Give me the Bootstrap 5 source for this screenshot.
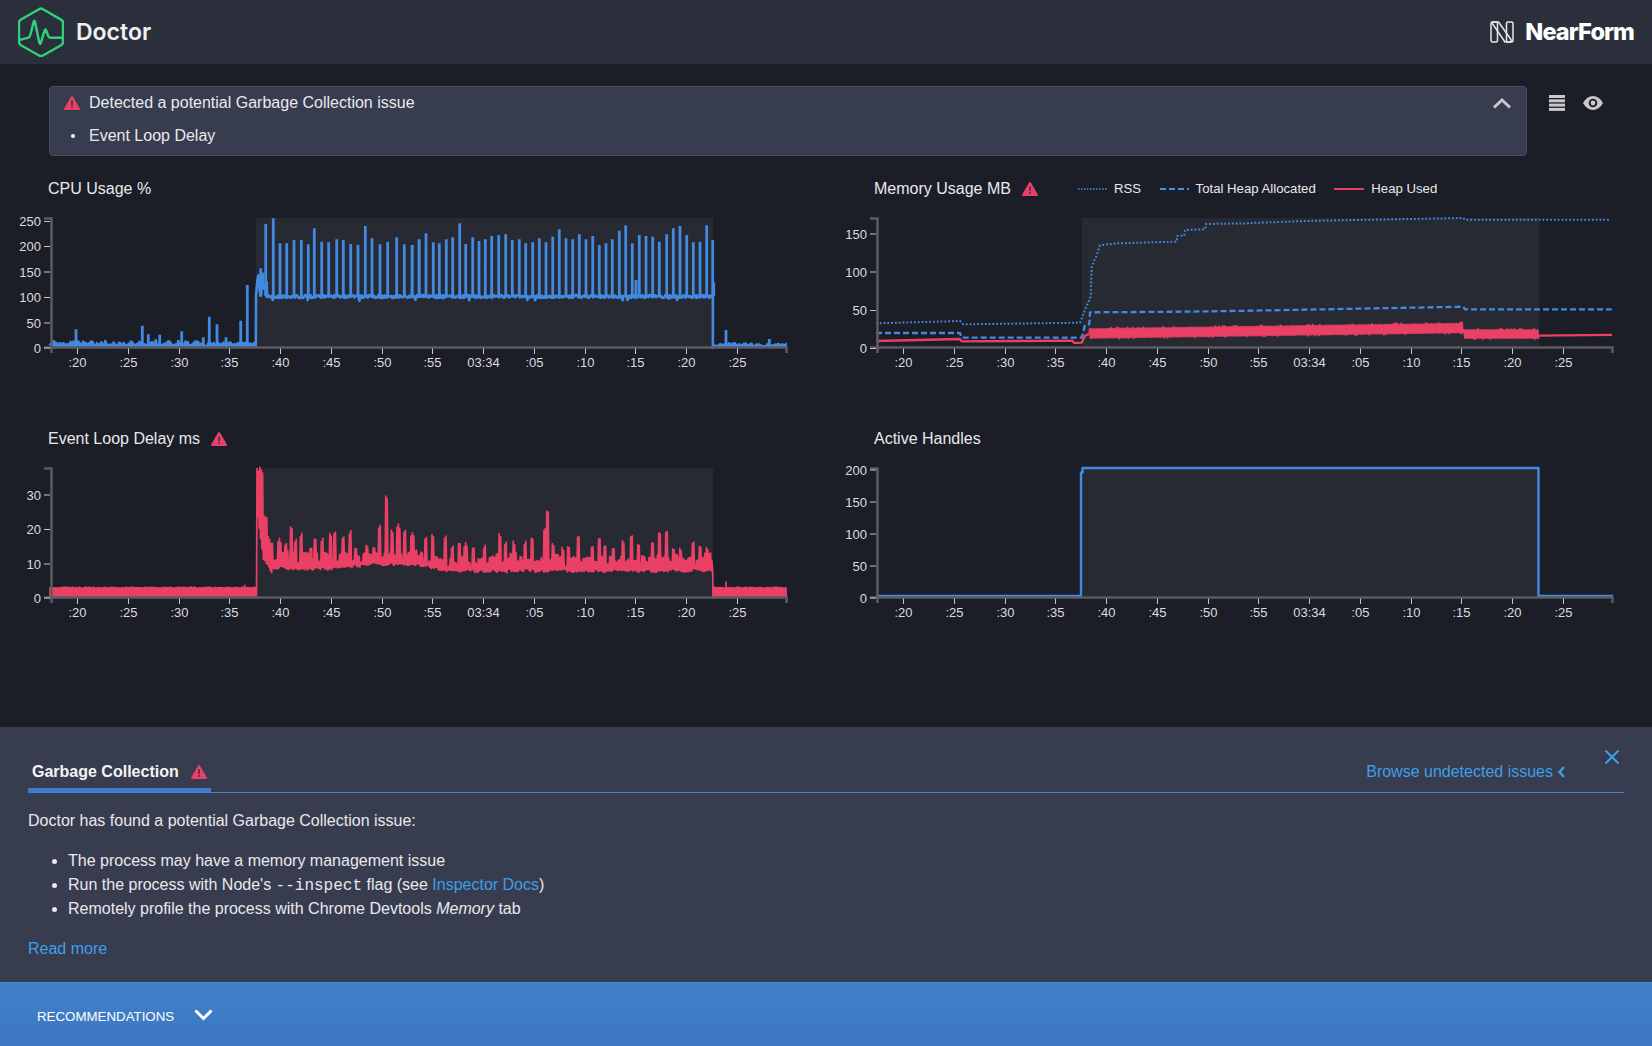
<!DOCTYPE html>
<html lang="en">
<head>
<meta charset="utf-8">
<title>Doctor</title>
<link href="https://cdn.jsdelivr.net/npm/bootstrap@5.3.0/dist/css/bootstrap.min.css" rel="stylesheet">
<style>
html,body{height:100%;}
body{background:#1b1e27;color:#e9e9ec;font-family:"Liberation Sans",Arial,sans-serif;font-size:16px;line-height:24px;overflow:hidden;}
.app-head{height:64px;flex:none;background:#2b2f3b;padding:0 18px 0 18px;}
.brand-name{font-family:Inter,sans-serif;font-weight:600;font-size:23px;color:#f0f0f2;margin-left:12px;line-height:64px;}
.nf-name{font-family:Inter,sans-serif;font-weight:800;font-size:23.5px;letter-spacing:-.9px;color:#fff;margin-left:11px;}
.top-row{padding:22px 0 0 49px;height:112px;}
.issue-box{width:1478px;height:70px;background:#383c4f;border:1px solid #484d62;border-radius:4px;padding:0 14px 0 14px;}
.issue-text{margin-top:-.5px;}
.issue-line{height:33px;line-height:24px;}
.issue-ico{width:25px;flex:none;}
.dot-mark{width:3.5px;height:3.5px;border-radius:50%;background:#e9e9ec;margin:0 14.500px 0 7px;flex:none;}
.chev-up{margin-top:10px;}
.tool-group{margin-left:22px;padding-top:9px;gap:18px;}
.chart-grid{display:grid;grid-template-columns:826px 826px;grid-auto-rows:250px;}
.chart-head{height:24px;padding:2px 0 0 48px;}
.warn-gap{margin-left:11px;}
.legend-list{margin-left:40px;font-size:13.2px;gap:18.5px;}
.legend-list>span{gap:7px;}
.chart-svg{display:block;width:826px;height:190px;}
.chart-svg text{font-family:"Liberation Sans",Arial,sans-serif;font-size:13px;fill:#dcdcdf;}
.detail-panel{height:255px;background:#383c4f;padding:0 28px;flex:none;}
.tab-row{height:66px;border-bottom:1.5px solid #3f7fd0;}
.tab-one{width:183px;height:100%;border-bottom:4px solid #3f7bc9;margin-bottom:-1.5px;padding:28px 0 0 4px;font-weight:700;color:#f4f4f6;gap:12px;white-space:nowrap;}
.side-link{color:#3f9fe8;text-decoration:none;}
.tab-right{height:100%;padding-top:24px;}
.close-x{margin-left:38px;margin-top:-29px;}
.detail-panel p{margin:0;}
.lead-line{margin-top:16px !important;}
.detail-panel ul{margin:16px 0 16px;padding-left:40px;}
.detail-panel code{font-family:"Liberation Mono",monospace;font-size:16px;line-height:1;color:#e9e9ec;}
.rec-bar{height:64px;flex:none;background:linear-gradient(#4080c9,#3d78c2);border-top:1px solid #4a86cf;padding-left:37px;color:#fff;font-size:13.3px;gap:20px;}
</style>
</head>
<body class="d-flex flex-column">
<header class="app-head d-flex align-items-center justify-content-between">
  <div class="d-flex align-items-center">
    <svg width="46" height="50" viewBox="17 6 47 51" fill="none" stroke="#2fd07c" stroke-width="2.500" stroke-linejoin="round" stroke-linecap="round">
      <path d="M38.500 8.200Q40.500 7 42.500 8.200L61 18.800Q63 20 63 22.300V41.500Q63 43.800 61 45L42.500 55.500Q40.500 56.600 38.500 55.500L20 45Q18 43.800 18 41.500V22.300Q18 20 20 18.800Z"/>
      <path d="M18.500 39.500L27 37.500Q29 37 30 33L33 21Q33.700 19 34.400 21L38.800 42.500Q39.500 45 40.300 42.500L44 30.500Q45 27.500 46 30.500L48 36Q48.500 37.300 50 37.300H63"/>
    </svg>
    <span class="brand-name">Doctor</span>
  </div>
  <div class="d-flex align-items-center">
    <svg width="24" height="22" viewBox="0 0 24 22" fill="none" stroke="#e6e6e8" stroke-width="1.500" stroke-linejoin="round">
      <rect x="1" y="1" width="6.500" height="20" rx="1.500"/>
      <rect x="16.500" y="1" width="6.500" height="20" rx="1.500"/>
      <path d="M3 1H8.500L21 18.500Q22 21 19.500 21H15L3 3.500Q2 1 3 1Z"/>
    </svg>
    <span class="nf-name">NearForm</span>
  </div>
</header>

<main class="flex-grow-1 overflow-hidden">
  <div class="top-row d-flex align-items-start">
    <div class="issue-box d-flex justify-content-between">
      <div class="issue-text">
        <div class="issue-line d-flex align-items-center">
          <span class="issue-ico d-flex"><svg width="16" height="14" viewBox="0 0 16 14"><use href="#warn"/></svg></span>
          <span>Detected a potential Garbage Collection issue</span>
        </div>
        <div class="issue-line d-flex align-items-center">
          <span class="dot-mark"></span>
          <span>Event Loop Delay</span>
        </div>
      </div>
      <svg class="chev-up" width="20" height="12" viewBox="0 0 20 12" fill="none" stroke="#c8c8cb" stroke-width="3"><path d="M2 10.500L10 3L18 10.500"/></svg>
    </div>
    <div class="tool-group d-flex align-items-center">
      <svg width="16" height="16" viewBox="0 0 16 16" fill="#c8c8cb"><rect y="0" width="16" height="3"/><rect y="4.300" width="16" height="3"/><rect y="8.600" width="16" height="3"/><rect y="12.900" width="16" height="3"/></svg>
      <svg width="20" height="14" viewBox="0 0 20 14"><path d="M0 7Q4 0 10 0T20 7Q16 14 10 14T0 7Z" fill="#c8c8cb"/><circle cx="10" cy="7" r="4.300" fill="#1b1e27"/><circle cx="10" cy="7" r="2.400" fill="#c8c8cb"/></svg>
    </div>
  </div>

  <section class="chart-grid">
    <div>
      <div class="chart-head d-flex align-items-center"><span>CPU Usage %</span></div>
      <svg class="chart-svg" id="c1" viewBox="0 200 826 190"></svg>
    </div>
    <div>
      <div class="chart-head d-flex align-items-center">
        <span>Memory Usage MB</span>
        <svg class="warn-gap" width="16" height="14" viewBox="0 0 16 14"><use href="#warn"/></svg>
        <div class="legend-list d-flex align-items-center">
          <span class="d-flex align-items-center"><svg width="29" height="4"><line x1="0" x2="29" y1="2" y2="2" stroke="#4a90e2" stroke-width="1.500" stroke-dasharray="1.500 1.500"/></svg>RSS</span>
          <span class="d-flex align-items-center"><svg width="29" height="4"><line x1="0" x2="29" y1="2" y2="2" stroke="#4a90e2" stroke-width="2" stroke-dasharray="6 3"/></svg>Total Heap Allocated</span>
          <span class="d-flex align-items-center"><svg width="30" height="4"><line x1="0" x2="30" y1="2" y2="2" stroke="#ea4065" stroke-width="2"/></svg>Heap Used</span>
        </div>
      </div>
      <svg class="chart-svg" id="c2" viewBox="826 200 826 190"></svg>
    </div>
    <div>
      <div class="chart-head d-flex align-items-center"><span>Event Loop Delay ms</span><svg class="warn-gap" width="16" height="14" viewBox="0 0 16 14"><use href="#warn"/></svg></div>
      <svg class="chart-svg" id="c3" viewBox="0 450 826 190"></svg>
    </div>
    <div>
      <div class="chart-head d-flex align-items-center"><span>Active Handles</span></div>
      <svg class="chart-svg" id="c4" viewBox="826 450 826 190"></svg>
    </div>
  </section>
</main>

<section class="detail-panel">
  <div class="tab-row d-flex justify-content-between">
    <div class="tab-one d-flex align-items-center">
      <span>Garbage Collection</span>
      <svg width="16" height="14" viewBox="0 0 16 14"><use href="#warn"/></svg>
    </div>
    <div class="tab-right d-flex align-items-center">
      <a class="side-link d-flex align-items-center" href="#">Browse undetected issues
        <svg class="ms-1" width="9" height="12" viewBox="0 0 9 12" fill="none" stroke="#3f9fe8" stroke-width="2.400"><path d="M7 1L2.500 6L7 11"/></svg>
      </a>
      <svg class="close-x me-1" width="16" height="16" viewBox="0 0 16 16" stroke="#3f9fe8" stroke-width="2" fill="none"><path d="M1.500 1.500L14.500 14.500M14.500 1.500L1.500 14.500"/></svg>
    </div>
  </div>
  <p class="lead-line">Doctor has found a potential Garbage Collection issue:</p>
  <ul>
    <li>The process may have a memory management issue</li>
    <li>Run the process with Node's <code>--inspect</code> flag (see <a class="side-link" href="#">Inspector Docs</a>)</li>
    <li>Remotely profile the process with Chrome Devtools <em>Memory</em> tab</li>
  </ul>
  <p><a class="side-link" href="#">Read more</a></p>
</section>

<footer class="rec-bar d-flex align-items-center">
  <span class="pt-1">RECOMMENDATIONS</span>
  <svg width="19" height="12" viewBox="0 0 19 12" fill="none" stroke="#fff" stroke-width="3"><path d="M1.500 1.500L9.500 9.500L17.500 1.500"/></svg>
</footer>

<svg width="0" height="0" class="position-absolute">
  <defs>
    <g id="warn">
      <path d="M8 1L15 13H1Z" fill="#ea4065" stroke="#ea4065" stroke-width="2" stroke-linejoin="round"/>
      <rect x="7.100" y="4.500" width="1.800" height="4.500" fill="#383c4f"/>
      <rect x="7.100" y="10" width="1.800" height="1.800" fill="#383c4f"/>
    </g>
  </defs>
</svg>

<script>
var seed=12345;
function R(){seed|=0;seed=seed+0x6D2B79F5|0;var t=Math.imul(seed^seed>>>15,1|seed);t=t+Math.imul(t^t>>>7,61|t)^t;return((t^t>>>14)>>>0)/4294967296;}
var BLUE='#4289e0',PINK='#ea4065';
var XL=[':20',':25',':30',':35',':40',':45',':50',':55','03:34',':05',':10',':15',':20',':25'];
function xt(i){return 77+i*50.75;}
function base(ox,y0,ticks){
  var s='';
  var top=y0-130, axis=y0-.5;
  s+='<rect x="'+(ox+256)+'" y="'+top+'" width="457" height="128" fill="#282a33"/>';
  return {bg:s,fg:function(){
    var f='';
    f+='<path d="M'+(ox+44)+' '+(top+.5)+'H'+(ox+51.5)+'V'+(y0+5)+'" fill="none" stroke="#5b5b61" stroke-width="2.500"/>';
    f+='<path d="M'+(ox+44)+' '+axis+'H'+(ox+786.5)+'V'+(y0+5)+'" fill="none" stroke="#5b5b61" stroke-width="2.500"/>';
    ticks.forEach(function(t){
      f+='<line x1="'+(ox+44)+'" x2="'+(ox+50)+'" y1="'+t[1]+'" y2="'+t[1]+'" stroke="#c8c8cc" stroke-width="1"/>';
      f+='<text x="'+(ox+41)+'" y="'+(t[1]+4.500)+'" text-anchor="end">'+t[0]+'</text>';
    });
    XL.forEach(function(l,i){
      var x=Math.round(ox+xt(i))+.5;
      f+='<line x1="'+x+'" x2="'+x+'" y1="'+(y0+.5)+'" y2="'+(y0+6)+'" stroke="#c8c8cc" stroke-width="1"/>';
      f+='<text x="'+x+'" y="'+(y0+19)+'" text-anchor="middle">'+l+'</text>';
    });
    return f;
  }};
}
function line(d,col,w,extra){return '<path d="'+d+'" fill="none" stroke="'+col+'" stroke-width="'+w+'" stroke-linejoin="round" '+(extra||'')+'/>';}

/* CPU */
(function(){
  var b=base(0,348,[[250,221.5],[200,246.5],[150,272],[100,297.5],[50,323],[0,348]]);
  var d='M50 345',x;
  for(x=50;x<256;x+=.6){d+='L'+x.toFixed(1)+' '+(346.5-R()*R()*6).toFixed(1);}
  d+='L256 296';
  for(x=257;x<267;x+=.7){d+='L'+x.toFixed(1)+' '+(272+R()*24).toFixed(1);}
  for(x=267;x<713;x+=.7){d+='L'+x.toFixed(1)+' '+(295+R()*3+(R()<.02?3:0)).toFixed(1);}
  d+='V349M713.500 347';
  for(x=714;x<787;x+=.6){d+='L'+x.toFixed(1)+' '+(346.5-R()*R()*4).toFixed(1);}
  var spikes='';
  [[228,388],[427,377],[445,403],[467,418],[479,404],[505,421],[545,394],[535,420],[628,350],[651,373],[678,412],[610,412],[722,362],[742,255],[190,428],[212,425],[237,426]].forEach(function(p){
    spikes+='M'+(p[0]/3).toFixed(1)+' 347V'+(200+p[1]/3).toFixed(1);});
  [[782,205],[797,72],[820,55],[840,130],[860,130],[882,120],[904,120],[925,133],[943,85],[965,125],[986,127],[1010,118],[1030,120],[1052,132],[1074,135],[1096,78],[1116,115],[1140,133],[1163,125],[1190,112],[1213,133],[1236,135],[1257,118]].forEach(function(p){
    spikes+='M'+(p[0]/3).toFixed(1)+' 296V'+(200+p[1]/3).toFixed(1);});
  var z=[[13,133],[37,135],[58,118],[78,100],[100,127],[118,130],[139,118],[158,112],[179,70],[197,132],[218,112],[237,123],[256,118],[275,108],[296,105],[317,103],[337,120],[358,118],[377,130],[398,127],[418,115],[438,127],[458,110],[478,88],[498,115],[518,118],[538,103],[558,118],[578,108],[598,135],[618,130],[637,118],[658,92],[677,76],[697,130],[708,240],[718,105],[738,108],[758,110],[778,125],[800,103],[820,85],[840,78],[860,105],[880,127],[900,125],[920,76],[938,120],[941,247]];
  z.forEach(function(p){spikes+='M'+(400+p[0]/3).toFixed(1)+' 296V'+(200+p[1]/3).toFixed(1);});
  spikes+='M726 347V330M734.300 347V342M769.300 347V339';
  document.getElementById('c1').innerHTML=b.bg+line(d,BLUE,2.600)+line(spikes,BLUE,2.800)+b.fg();
})();

/* Memory */
(function(){
  var b=base(826,348,[[150,234],[100,272],[50,310.500],[0,348.500]]);
  function zz(a5,a6){
    var out=[];
    a5.forEach(function(p){out.push((850+p[0]/3).toFixed(1)+' '+(170+p[1]/3).toFixed(1));});
    a6.forEach(function(p){out.push((1250+p[0]/3).toFixed(1)+' '+(170+p[1]/3).toFixed(1));});
    return 'M'+out.join('L');
  }
  var rss=zz([[78,460],[330,453],[340,463],[690,458],[705,420],[722,380],[725,290],[740,255],[750,226],[800,220],[980,215],[982,198],[1003,197],[1005,180],[1065,178],[1068,162],[1200,160]],[[0,159],[200,152],[640,144],[645,149],[1080,149]]);
  var alloc=zz([[78,489],[330,489],[335,503],[695,503],[705,465],[718,463],[720,427],[1000,425],[1200,422]],[[0,422],[640,410],[645,418],[1085,418]]);
  var used=zz([[78,513],[330,507],[335,514],[668,512],[672,519],[695,518],[705,497],[718,492]],[]);
  var x,up=true,start=1089.5,end=1463.300;
  var zig='M'+start+' 333';
  for(x=start;x<=1539;x+=.9){
    var c;
    if(x<end){c=333.5-(x-start)/(end-start)*5.5;}
    else{c=334;}
    var h=x<end?4.6:4.2;
    var j=R()<.15?1:0;
    zig+='L'+x.toFixed(1)+' '+(c+(up?-h-j:h+j)).toFixed(1);
    up=!up;
  }
  var tail='M1539 335.700L1612 334.800';
  document.getElementById('c2').innerHTML=b.bg+
    line(rss,BLUE,2,'stroke-dasharray="1.800 2"')+
    line(alloc,BLUE,2.300,'stroke-dasharray="6 3"')+
    line(used,PINK,2.300)+line(zig,PINK,1.600)+line(tail,PINK,2.300)+b.fg();
})();

/* Event loop */
(function(){
  var b=base(0,598,[[30,495],[20,529.500],[10,564],[0,598]]);
  var d='M50 597',x,up=true;
  for(x=50;x<256.5;x+=.7){d+='L'+x.toFixed(1)+' '+(up?587+R()*1.2-(R()<.01?2:0):597.5).toFixed(1);up=!up;}
  var S=[];
  [[770,145],[780,142],[790,285],[798,290],[815,368],[838,355],[858,370],[873,320],[888,358],[905,340],[945,355],[968,355],[990,340],[1005,335],[1030,350],[1052,332],[1100,375],[1140,316],[1158,228],[1175,330],[1195,312],[1215,330],[1238,340]].forEach(function(p){S.push([p[0]/3,420+p[1]/3]);});
  [[37,338],[78,352],[97,344],[137,348],[158,378],[178,368],[197,368],[220,382],[255,376],[298,341],[318,366],[340,364],[377,364],[396,353],[435,325],[442,272],[458,370],[487,382],[505,378],[535,348],[577,378],[598,354],[615,376],[640,384],[668,362],[695,346],[715,372],[757,366],[778,337],[800,333],[820,385],[840,385],[880,365],[900,378],[920,382],[930,397]].forEach(function(p){S.push([400+p[0]/3,420+p[1]/3]);});
  function lowAt(x){
    if(x<263)return 500+(x-256)*8;
    if(x<272)return 556+(x-263)*1.5;
    if(x<340)return 566;
    if(x<372)return 566-(x-340)*.15;
    if(x<415)return 561.5;
    if(x<450)return 561.5+(x-415)*.2;
    return 568.5;
  }
  function topAt(x){
    if(x<263)return 470;
    if(x<272)return 520+(x-263)*3;
    if(x<420)return 552;
    return 556;
  }
  var ntop=[],nlow=[],k;
  for(k=0;k<240;k++){ntop.push(R());nlow.push(R());}
  d+='L256.500 598L257 470';
  for(x=257;x<713;x+=.7){
    var idx=Math.floor(x/3);
    var lo=lowAt(x)+nlow[idx%240]*3+R()*1.5;
    var hi=topAt(x)+(ntop[idx%240]*ntop[idx%240])*10-(ntop[(idx+17)%240]>.8?5:0)+R()*2;
    for(var i=0;i<S.length;i++){
      var dx=Math.abs(S[i][0]-x);
      if(dx<1.5){ hi=Math.min(hi,S[i][1]+dx*dx*2); }
    }
    d+='L'+x.toFixed(1)+' '+(up?hi:lo).toFixed(1);up=!up;
  }
  d+='L713 598';
  for(x=713;x<787;x+=.7){d+='L'+x.toFixed(1)+' '+(up?587+R()*1.2:597.5).toFixed(1);up=!up;}
  d+='M726 590V581.500';
  document.getElementById('c3').innerHTML=b.bg+line(d,PINK,1.700)+b.fg();
})();

/* Active handles */
(function(){
  var b=base(826,598,[[200,470],[150,502],[100,534],[50,566],[0,598]]);
  var d='M876 596H1081V472.500H1082.500V468H1538.500V596H1613';
  document.getElementById('c4').innerHTML=b.bg+line(d,BLUE,2.400)+b.fg();
})();
</script>
<script src="https://cdn.jsdelivr.net/npm/bootstrap@5.3.0/dist/js/bootstrap.bundle.min.js"></script>
</body>
</html>
